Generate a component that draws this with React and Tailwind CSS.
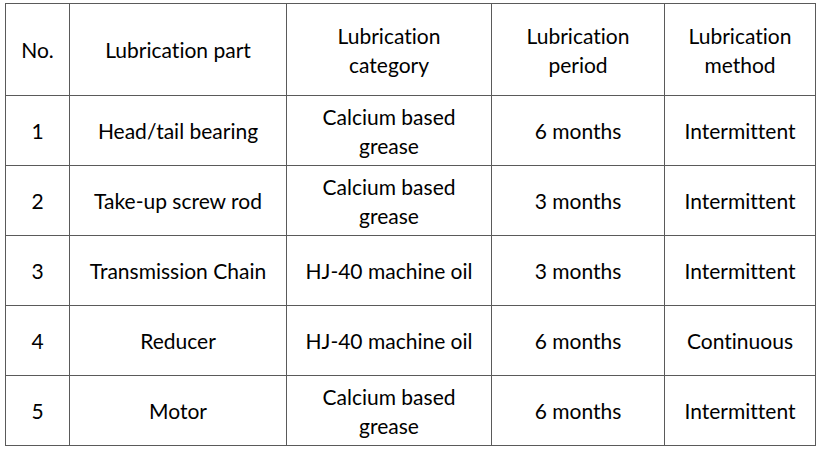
const rows = [
  { no: '1', part: 'Head/tail bearing', category: ['Calcium based', 'grease'], period: '6 months', method: 'Intermittent' },
  { no: '2', part: 'Take-up screw rod', category: ['Calcium based', 'grease'], period: '3 months', method: 'Intermittent' },
  { no: '3', part: 'Transmission Chain', category: ['HJ-40 machine oil'], period: '3 months', method: 'Intermittent' },
  { no: '4', part: 'Reducer', category: ['HJ-40 machine oil'], period: '6 months', method: 'Continuous' },
  { no: '5', part: 'Motor', category: ['Calcium based', 'grease'], period: '6 months', method: 'Intermittent' },
];

const cell = 'border border-[#5a5a5a] text-center align-middle p-0';

function Lines({ lines }) {
  return lines.map((l, i) => (
    <div key={i}>{l}</div>
  ));
}

export default function App() {
  return (
    <div className="w-[820px] h-[451px] bg-white pt-[3px] pl-[5px]">
      <table
        className="border-collapse table-fixed text-[21px] leading-[29px] text-black [font-variant-ligatures:none]"
        style={{ fontFamily: 'Lato, "Open Sans", sans-serif' }}
      >
        <colgroup>
          <col className="w-[64px]" />
          <col className="w-[217px]" />
          <col className="w-[205px]" />
          <col className="w-[173px]" />
          <col className="w-[151px]" />
        </colgroup>
        <thead>
          <tr className="h-[92px]">
            <td className={cell}>No.</td>
            <td className={cell}>Lubrication part</td>
            <td className={cell}><Lines lines={['Lubrication', 'category']} /></td>
            <td className={cell}><Lines lines={['Lubrication', 'period']} /></td>
            <td className={cell}><Lines lines={['Lubrication', 'method']} /></td>
          </tr>
        </thead>
        <tbody>
          {rows.map((r) => (
            <tr key={r.no} className="h-[70px]">
              <td className={cell}>{r.no}</td>
              <td className={cell}>{r.part}</td>
              <td className={cell}><Lines lines={r.category} /></td>
              <td className={cell}>{r.period}</td>
              <td className={cell}>{r.method}</td>
            </tr>
          ))}
        </tbody>
      </table>
    </div>
  );
}
